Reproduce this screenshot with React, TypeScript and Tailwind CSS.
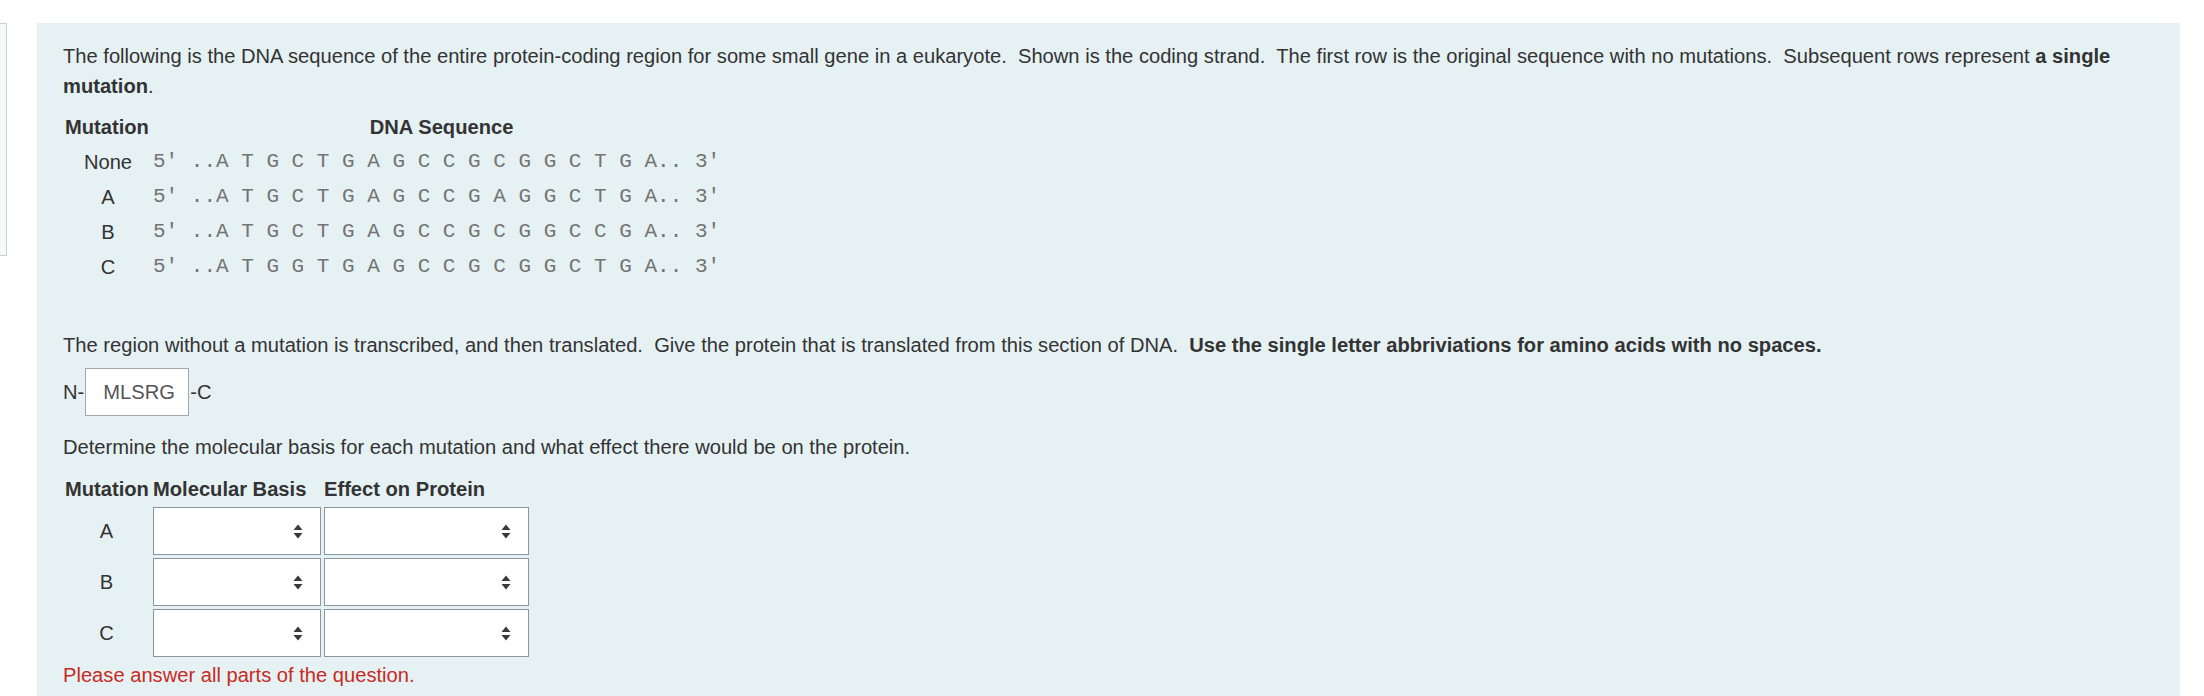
const sequences = [
  { label: 'None', seq: 'A T G C T G A G C C G C G G C T G A' },
  { label: 'A', seq: 'A T G C T G A G C C G A G G C T G A' },
  { label: 'B', seq: 'A T G C T G A G C C G C G G C C G A' },
  { label: 'C', seq: 'A T G G T G A G C C G C G G C T G A' },
];

function SortArrows() {
  return (
    <svg width="10" height="15" viewBox="0 0 10 15" className="shrink-0">
      <path d="M5 0.5 L9.5 6 L0.5 6 Z" fill="#3a3a3a" />
      <path d="M5 14.5 L9.5 9 L0.5 9 Z" fill="#3a3a3a" />
    </svg>
  );
}

function SelectBox() {
  return (
    <div className="h-[48px] bg-white border border-[#8c969f] flex items-center justify-end pr-[17px]">
      <SortArrows />
    </div>
  );
}

export default function App() {
  return (
    <div
      className="w-full h-[696px] bg-white flex items-start pt-[23px] overflow-hidden text-[#333333]"
      style={{ fontFamily: '"Liberation Sans", Arial, sans-serif' }}
    >
      {/* side panel edge */}
      <div className="w-[7px] h-[233px] shrink-0 bg-[#f6f8fa] border border-l-0 border-[#c8cfd8]" />

      <div className="ml-[30px] w-[2143px] shrink-0 bg-[#e6f1f3] pl-[26px] pr-[20px] pt-[18px] h-[700px] text-[20.15px] leading-[30px]">
        <p>
          The following is the DNA sequence of the entire protein-coding region for some small gene in a eukaryote.&nbsp; Shown is the coding strand.&nbsp; The first row is the original sequence with no mutations.&nbsp; Subsequent rows represent <b>a single mutation</b>.
        </p>

        {/* sequence table */}
        <div className="mt-[11px] grid grid-cols-[90px_auto] w-fit">
          <div className="h-[32px] pl-[2px] font-bold">Mutation</div>
          <div className="h-[32px] font-bold text-center pl-[10px]">DNA Sequence</div>
          {sequences.map((r) => (
            <div key={r.label} className="contents">
              <div className="h-[35px] flex items-center justify-center">{r.label}</div>
              <div
                className="h-[35px] flex items-center text-[21px] text-[#747474] whitespace-pre"
                style={{ fontFamily: '"Liberation Mono", "Courier New", monospace' }}
              >
                {`5\u2032 ..${r.seq}.. 3\u2032`}
              </div>
            </div>
          ))}
        </div>

        <p className="mt-[46px]">
          The region without a mutation is transcribed, and then translated.&nbsp; Give the protein that is translated from this section of DNA.&nbsp; <b>Use the single letter abbriviations for amino acids with no spaces.</b>
        </p>

        <div className="mt-[8px] flex items-center h-[48px]">
          <span>N-</span>
          <div className="ml-[1px] h-[48px] w-[104px] bg-white border border-[#a3a9ae] flex items-center pl-[17px] text-[#555555]">
            MLSRG
          </div>
          <span className="ml-[1px]">-C</span>
        </div>

        <p className="mt-[16px]">Determine the molecular basis for each mutation and what effect there would be on the protein.</p>

        {/* answer table */}
        <div className="mt-[12px] grid grid-cols-[87px_168px_205px] gap-x-[3px] gap-y-[3px] w-fit">
          <div className="h-[30px] pl-[2px] font-bold whitespace-nowrap">Mutation</div>
          <div className="h-[30px] font-bold whitespace-nowrap">Molecular Basis</div>
          <div className="h-[30px] font-bold whitespace-nowrap">Effect on Protein</div>
          {['A', 'B', 'C'].map((m) => (
            <div key={m} className="contents">
              <div className="h-[48px] flex items-center justify-center">{m}</div>
              <SelectBox />
              <SelectBox />
            </div>
          ))}
        </div>

        <p className="mt-[3px] text-[#c62b23]">Please answer all parts of the question.</p>
      </div>
    </div>
  );
}
